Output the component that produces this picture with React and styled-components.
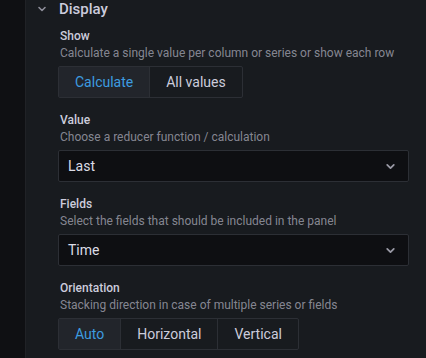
import React from "react";
import styled, { createGlobalStyle } from "styled-components";

const GlobalStyle = createGlobalStyle`
  html, body {
    margin: 0;
    padding: 0;
    background: #181b1f;
    font-family: Roboto, "Noto Sans", sans-serif;
    -webkit-font-smoothing: antialiased;
  }
`;

const Chevron = ({ size = 10, color = "#8e8e9a" }) => (
  <svg width={size} height={size} viewBox="0 0 10 10" fill="none">
    <path d="M2 3.5 L5 6.5 L8 3.5" stroke={color} strokeWidth="1.6" strokeLinecap="round" strokeLinejoin="round" />
  </svg>
);

const RadioGroup = ({ options, active }) => (
  <Group>
    {options.map((o) => (
      <RadioButton key={o} $active={o === active}>
        {o}
      </RadioButton>
    ))}
  </Group>
);

const Select = ({ value }) => (
  <SelectBox>
    <span>{value}</span>
    <Chevron size={11} color="#9a9aa6" />
  </SelectBox>
);

const Field = ({ label, description, children }) => (
  <FieldWrap>
    <Label>{label}</Label>
    <Description>{description}</Description>
    {children}
  </FieldWrap>
);

export default function App() {
  return (
    <Page>
      <GlobalStyle />
      <Strip />
      <Panel>
        <SectionHeader>
          <Chevron size={10} />
          <SectionTitle>Display</SectionTitle>
        </SectionHeader>
        <Content>
          <Field label="Show" description="Calculate a single value per column or series or show each row">
            <RadioGroup options={["Calculate", "All values"]} active="Calculate" />
          </Field>
          <Field label="Value" description="Choose a reducer function / calculation">
            <Select value="Last" />
          </Field>
          <Field label="Fields" description="Select the fields that should be included in the panel">
            <Select value="Time" />
          </Field>
          <Field label="Orientation" description="Stacking direction in case of multiple series or fields">
            <RadioGroup options={["Auto", "Horizontal", "Vertical"]} active="Auto" />
          </Field>
        </Content>
      </Panel>
    </Page>
  );
}

const Page = styled.div`
  display: flex;
  width: 426px;
  height: 358px;
  overflow: hidden;
  background: #181b1f;
`;

const Strip = styled.div`
  width: 25px;
  flex-shrink: 0;
  background: #0f1013;
  border-right: 1px solid #202226;
`;

const Panel = styled.div`
  flex: 1;
  display: flex;
  flex-direction: column;
  padding: 0 17px 0 11px;
`;

const SectionHeader = styled.div`
  display: flex;
  align-items: center;
  gap: 12px;
  height: 18px;
`;

const SectionTitle = styled.div`
  font-size: 15px;
  font-weight: 500;
  color: #ccccdc;
  line-height: 18px;
`;

const Content = styled.div`
  display: flex;
  flex-direction: column;
  padding: 10px 0 0 21px;
`;

const FieldWrap = styled.div`
  display: flex;
  flex-direction: column;
  align-items: flex-start;
  margin-bottom: 14px;
`;

const Label = styled.div`
  font-size: 12px;
  font-weight: 500;
  line-height: 16px;
  color: #ccccdc;
  padding-left: 2px;
`;

const Description = styled.div`
  font-size: 12px;
  line-height: 16px;
  white-space: nowrap;
  color: rgba(204, 204, 220, 0.62);
  padding-left: 2px;
  margin: 1px 0 5px;
`;

const Group = styled.div`
  display: flex;
  height: 32px;
  box-sizing: border-box;
  border: 1px solid #2c2f35;
  border-radius: 2px;
`;

const RadioButton = styled.div`
  display: flex;
  align-items: center;
  padding: 0 16px;
  font-size: 14px;
  color: ${(p) => (p.$active ? "#3d9ce0" : "#ccccdc")};
  background: ${(p) => (p.$active ? "#22252b" : "transparent")};
  & + & {
    border-left: 1px solid #2c2f35;
  }
`;

const SelectBox = styled.div`
  display: flex;
  align-items: center;
  justify-content: space-between;
  width: 351px;
  height: 32px;
  box-sizing: border-box;
  padding: 0 12px 0 9px;
  background: #0e0f12;
  border: 1px solid #2c2f35;
  border-radius: 2px;
  font-size: 14px;
  color: #dcdce6;
`;
